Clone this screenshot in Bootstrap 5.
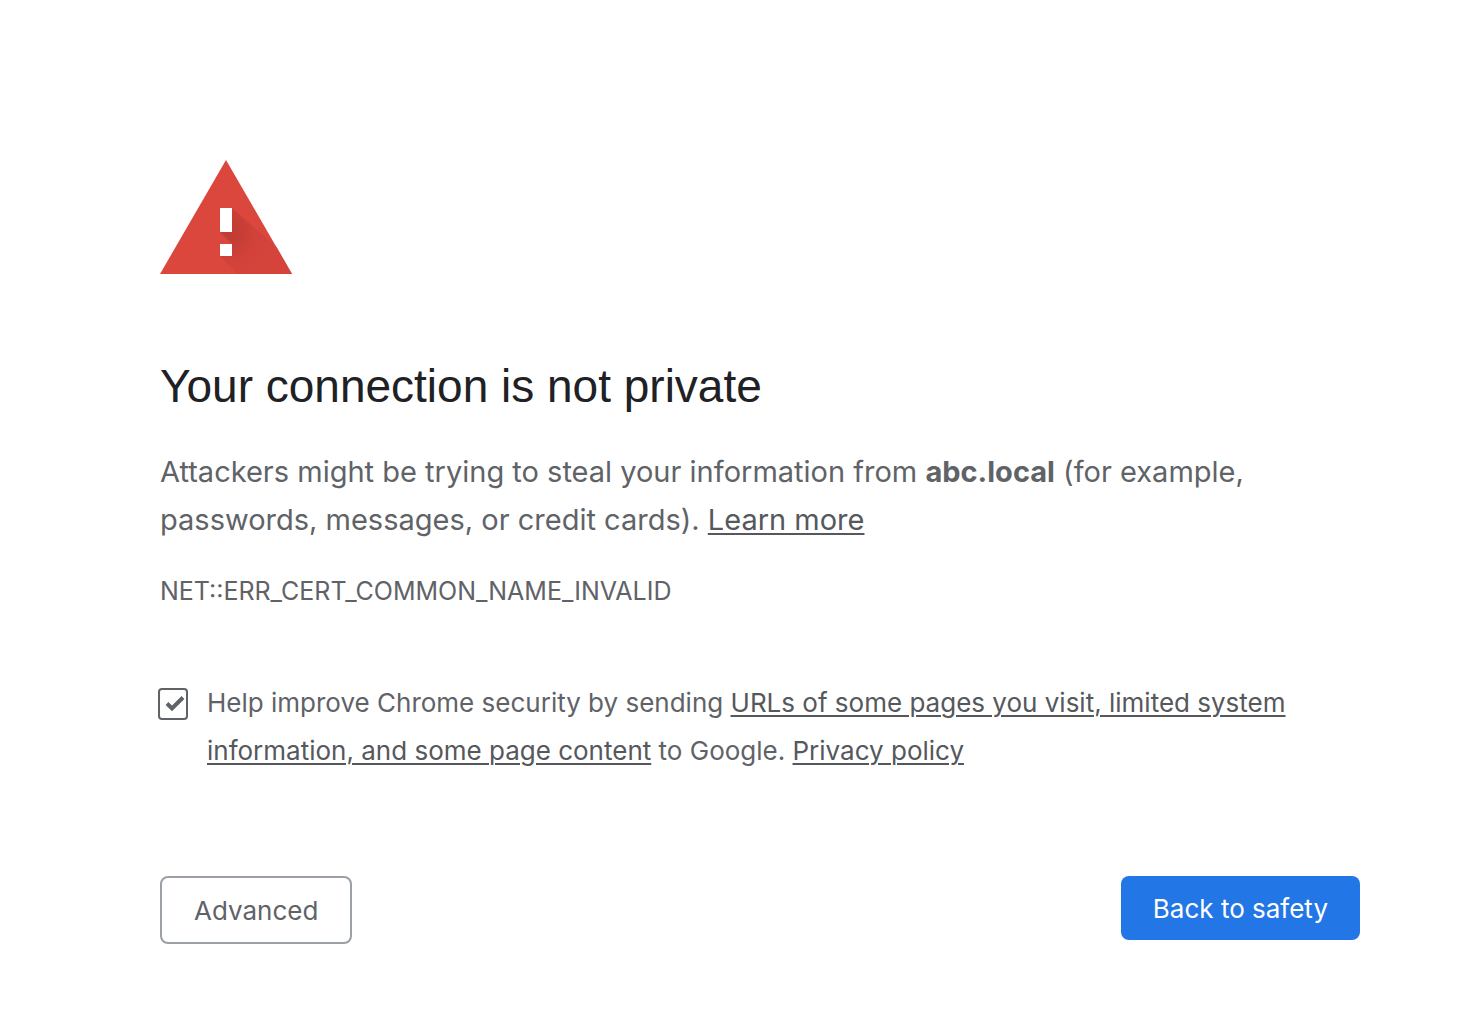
<!DOCTYPE html>
<html lang="en">
<head>
<meta charset="utf-8">
<meta name="viewport" content="width=device-width, initial-scale=1">
<title>Privacy error</title>
<link href="https://cdn.jsdelivr.net/npm/bootstrap@5.3.0/dist/css/bootstrap.min.css" rel="stylesheet">
<style>
body { font-family: Inter, "Liberation Sans", sans-serif; color: #5f6368; background: #fff; }
a, a:hover { color: #55585c; text-underline-offset: 3px; text-decoration-thickness: 2px; }
.interstitial { max-width: 1360px; padding: 160px 0 88px 160px; }
.warning-icon { width: 132px; height: 114px; margin-bottom: 84px; }
.headline { font-family: "Liberation Sans", Arial, sans-serif; font-size: 46px; line-height: 56px; font-weight: 400; color: #202124; margin-bottom: 34px; }
.message { font-size: 29px; line-height: 48px; margin-bottom: 24px; }
.error-code { font-size: 25px; line-height: 46px; margin-bottom: 65px; }
.opt-in { margin-bottom: 101px; }
.opt-in label { font-size: 26px; line-height: 48px; }
.opt-in .form-check-input { width: 30px; height: 32px; margin: 9px 19px 0 -2px; border: 2px solid #5f6368; border-radius: 4px; }
.opt-in .form-check-input:checked { background-color: #fff; background-size: 26px 28px; background-image: url("data:image/svg+xml,%3Csvg xmlns='http://www.w3.org/2000/svg' viewBox='0 0 26 28'%3E%3Cpath d='M7 13.500l5 5L23 7.500' fill='none' stroke='%235f6368' stroke-width='4'/%3E%3C/svg%3E"); }
.page-btn { font-size: 26px; line-height: 40px; padding: 13px 32px 11px; border: 0; border-radius: 8px; }
.btn-advanced, .btn-advanced:hover { color: #5f6368; border: 2px solid #9aa0a6; background: #fff; }
.btn-safe, .btn-safe:hover { color: #fff; background: #2376e5; }
</style>
</head>
<body>
<main class="interstitial mx-0">
  <svg class="warning-icon d-block" viewBox="0 0 132 114" role="img" aria-label="Warning">
    <defs>
      <radialGradient id="shade" gradientUnits="userSpaceOnUse" cx="66" cy="72" r="52"><stop offset="0" stop-color="#bd3c33"/><stop offset=".3" stop-color="#c63e36"/><stop offset=".6" stop-color="#d2423a"/><stop offset="1" stop-color="#d5443b"/></radialGradient>
    </defs>
    <path d="M66 0l66 114H0z" fill="#db463d"/>
    <path d="M72 48l44.500 39L132 114H78L60 96l12-12-12-12z" fill="url(#shade)"/>
    <path d="M60 48h12v24H60zM60 84h12v12H60z" fill="#fff"/>
  </svg>
  <h1 class="headline">Your connection is not private</h1>
  <p class="message">Attackers might be trying to steal your information from <strong>abc.local</strong> (for example, passwords, messages, or credit cards). <a href="#learn">Learn more</a></p>
  <div class="error-code">NET::ERR_CERT_COMMON_NAME_INVALID</div>
  <div class="opt-in d-flex align-items-start">
    <input class="form-check-input flex-shrink-0" type="checkbox" id="optin" checked>
    <label for="optin">Help improve Chrome security by sending <a href="#data">URLs of some pages you visit, limited system information, and some page content</a> to Google. <a href="#privacy">Privacy policy</a></label>
  </div>
  <div class="d-flex justify-content-between align-items-start">
    <button type="button" class="btn page-btn btn-advanced">Advanced</button>
    <button type="button" class="btn page-btn btn-safe">Back to safety</button>
  </div>
</main>
<script src="https://cdn.jsdelivr.net/npm/bootstrap@5.3.0/dist/js/bootstrap.bundle.min.js"></script>
</body>
</html>
